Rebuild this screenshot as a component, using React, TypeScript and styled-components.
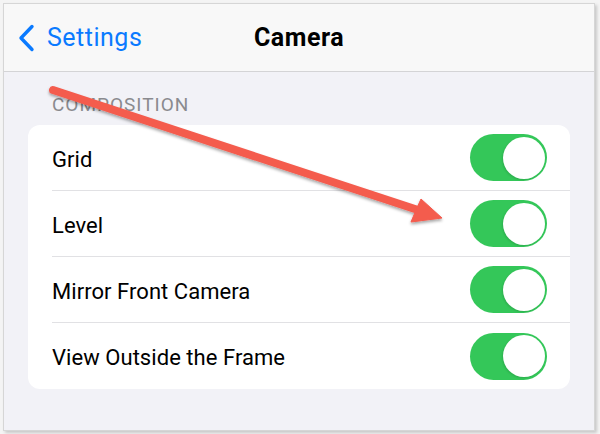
import React from "react";
import styled, { createGlobalStyle } from "styled-components";

const Global = createGlobalStyle`
  html, body { margin: 0; padding: 0; background: #ffffff; }
  body { font-family: Roboto, Inter, "Noto Sans", sans-serif; -webkit-font-smoothing: antialiased; }
`;

const Stage = styled.div`
  position: relative;
  width: 600px;
  height: 434px;
  padding: 3px 5px 3px 3px;
  box-sizing: border-box;
  background: #f4f4f4;
`;

const Frame = styled.div`
  width: 592px;
  height: 428px;
  box-sizing: border-box;
  border: 1px solid #d6d6d6;
  box-shadow: 2px 2px 3px rgba(0, 0, 0, 0.18);
  background: #f2f2f7;
  display: flex;
  flex-direction: column;
  overflow: hidden;
`;

const NavBar = styled.div`
  height: 68px;
  flex: none;
  box-sizing: border-box;
  background: #f8f8f8;
  border-bottom: 1px solid #d4d4d6;
  display: grid;
  grid-template-columns: 1fr auto 1fr;
  align-items: center;
`;

const BackButton = styled.div`
  display: flex;
  align-items: center;
  gap: 12px;
  padding-left: 13px;
  color: #0a7aff;
  font-size: 25px;
  letter-spacing: 0.5px;
`;

const Title = styled.div`
  font-size: 25px;
  font-weight: 700;
  color: #000;
  letter-spacing: 0.5px;
`;

const Content = styled.div`
  display: flex;
  flex-direction: column;
  padding: 0 24px;
`;

const SectionLabel = styled.div`
  padding: 21px 0 0 24px;
  height: 53px;
  box-sizing: border-box;
  font-size: 19px;
  color: #8a8a8e;
  letter-spacing: 1px;
`;

const Card = styled.div`
  background: #ffffff;
  border-radius: 12px;
  display: flex;
  flex-direction: column;
  padding-left: 24px;
`;

const Row = styled.div<{ $last?: boolean }>`
  height: 66px;
  box-sizing: border-box;
  display: flex;
  align-items: center;
  justify-content: space-between;
  padding-right: 23px;
  border-bottom: ${(p) => (p.$last ? "none" : "1px solid #e1e1e4")};
`;

const RowLabel = styled.div`
  font-size: 22px;
  color: #000;
  padding-top: 3px;
  letter-spacing: 0.05px;
`;

const Track = styled.div<{ $on: boolean }>`
  width: 77px;
  height: 47px;
  border-radius: 24px;
  background: ${(p) => (p.$on ? "#34c759" : "#e9e9eb")};
  display: flex;
  align-items: center;
  justify-content: ${(p) => (p.$on ? "flex-end" : "flex-start")};
  padding: 0 2px;
  box-sizing: border-box;
`;

const Knob = styled.div`
  width: 42px;
  height: 42px;
  border-radius: 50%;
  background: #ffffff;
  box-shadow: -1px 1px 2px rgba(0, 0, 0, 0.12);
`;

const ArrowLayer = styled.svg`
  position: absolute;
  left: 0;
  top: 0;
  pointer-events: none;
`;

const Toggle = ({ on }: { on: boolean }) => (
  <Track $on={on}>
    <Knob />
  </Track>
);

const rows = ["Grid", "Level", "Mirror Front Camera", "View Outside the Frame"];

export default function App() {
  return (
    <>
      <Global />
      <Stage>
        <Frame>
          <NavBar>
            <BackButton>
              <svg width="18" height="28" viewBox="0 0 18 28">
                <path
                  d="M15 2.5 L4 14 L15 25.5"
                  fill="none"
                  stroke="#0a7aff"
                  strokeWidth="3.4"
                  strokeLinecap="round"
                  strokeLinejoin="round"
                />
              </svg>
              <span>Settings</span>
            </BackButton>
            <Title>Camera</Title>
            <div />
          </NavBar>
          <Content>
            <SectionLabel>COMPOSITION</SectionLabel>
            <Card>
              {rows.map((r, i) => (
                <Row key={r} $last={i === rows.length - 1}>
                  <RowLabel>{r}</RowLabel>
                  <Toggle on />
                </Row>
              ))}
            </Card>
          </Content>
        </Frame>
        <ArrowLayer width="600" height="434" viewBox="0 0 600 434">
          <defs>
            <filter id="sh" x="-10%" y="-10%" width="120%" height="130%">
              <feDropShadow dx="0" dy="2" stdDeviation="1.6" floodColor="#000" floodOpacity="0.35" />
            </filter>
          </defs>
          <g filter="url(#sh)" fill="#f45b4e" stroke="#f45b4e">
            <line x1="53" y1="90" x2="418" y2="210" strokeWidth="8" strokeLinecap="round" />
            <polygon points="442,218 411,222 416,210 421,199" strokeWidth="1" strokeLinejoin="round" />
          </g>
        </ArrowLayer>
      </Stage>
    </>
  );
}
